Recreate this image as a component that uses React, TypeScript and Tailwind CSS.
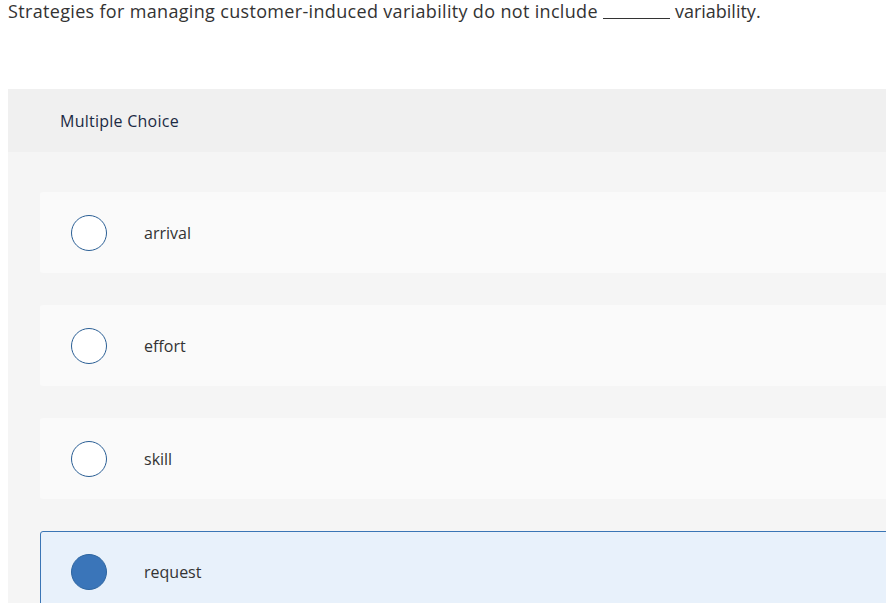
const options = [
  { label: "arrival", selected: false },
  { label: "effort", selected: false },
  { label: "skill", selected: false },
  { label: "request", selected: true },
];

export default function App() {
  return (
    <div
      className="h-[603px] w-[886px] overflow-hidden bg-white text-[#333]"
      style={{ fontFamily: "'Open Sans', sans-serif" }}
    >
      <p className="ml-2 text-[18px] leading-[22px] tracking-[0.33px] text-[#333]">
        Strategies for managing customer-induced variability do not include{" "}
        <span className="inline-block w-[67px] translate-y-[1px] border-b border-[#333]" />{" "}
        <span className="tracking-[0px]">variability.</span>
      </p>

      <div className="ml-2 mt-[67px] w-[900px] rounded-tl-[3px]">
        <div className="flex h-[63px] items-center bg-[#f0f0f0] pl-[52px] text-[16px] tracking-[0.25px] text-[#1c2a44]">
          Multiple Choice
        </div>
        <div className="flex flex-col gap-[32px] bg-[#f5f5f5] pl-[32px] pt-[40px]">
          {options.map((opt) => (
            <div
              key={opt.label}
              className={
                opt.selected
                  ? "flex h-[82px] items-center rounded-tl-[3px] border border-[#3a75b5] bg-[#e8f1fb] pl-[30px]"
                  : "flex h-[81px] items-center rounded-l-[3px] bg-[#fafafa] pl-[31px]"
              }
            >
              <span
                className={
                  opt.selected
                    ? "h-[36px] w-[36px] shrink-0 rounded-full border border-[#2d65a0] bg-[#3a75b9]"
                    : "h-[36px] w-[36px] shrink-0 rounded-full border-[1.5px] border-[#2b5f95] bg-white"
                }
              />
              <span className="ml-[37px] text-[16px] text-[#333]">{opt.label}</span>
            </div>
          ))}
        </div>
      </div>
    </div>
  );
}
